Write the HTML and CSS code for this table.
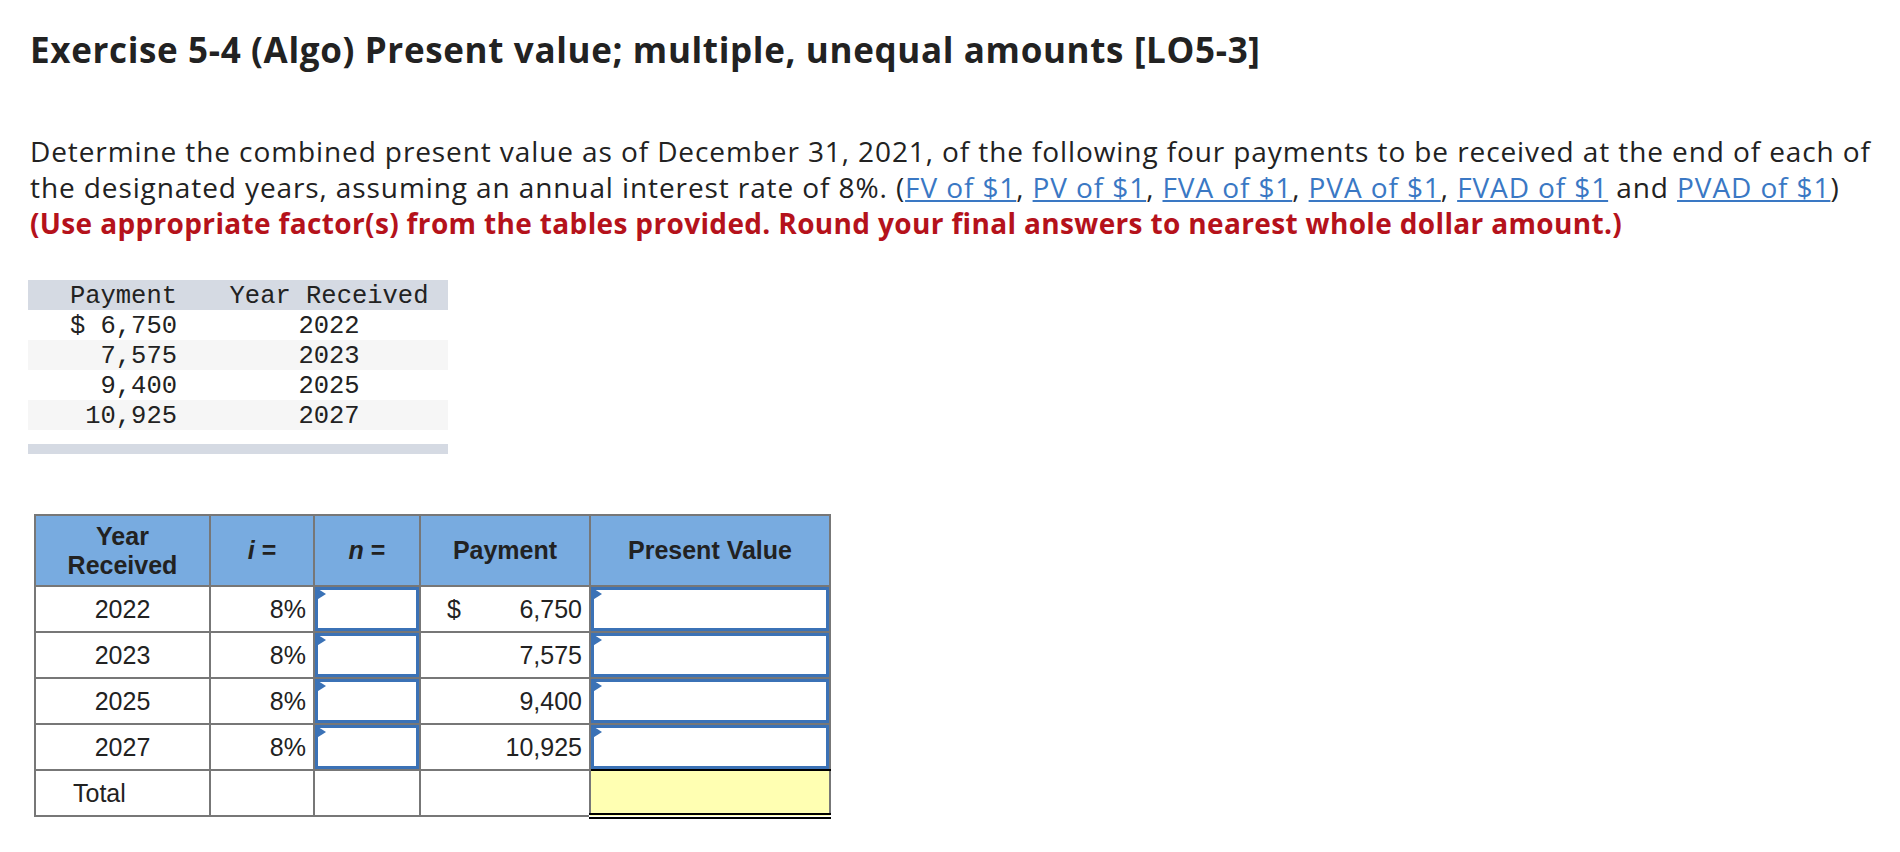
FILE: index.html
```html
<!DOCTYPE html>
<html lang="en">
<head>
<meta charset="utf-8">
<title>Exercise 5-4</title>
<link rel="stylesheet" href="styles.css">
</head>
<body>
<div class="page">
  <h1 class="title">Exercise 5-4 (Algo) Present value; multiple, unequal amounts [LO5-3]</h1>
  <p class="prompt"><span>Determine the combined present value as of December 31, 2021, of the following four payments to be received at the end of each of</span><br><span>the designated years, assuming an annual interest rate of 8%. (<a href="#">FV of $1</a>, <a href="#">PV of $1</a>, <a href="#">FVA of $1</a>, <a href="#">PVA of $1</a>, <a href="#">FVAD of $1</a> and <a href="#">PVAD of $1</a>)</span><br><strong class="note">(Use appropriate factor(s) from the tables provided. Round your final answers to nearest whole dollar amount.)</strong></p>

  <div class="given">
    <table class="given-table">
      <thead>
        <tr><th class="c-pay">Payment</th><th class="c-year">Year Received</th></tr>
      </thead>
      <tbody>
        <tr><td class="c-pay">$ 6,750</td><td class="c-year">2022</td></tr>
        <tr class="alt"><td class="c-pay">7,575</td><td class="c-year">2023</td></tr>
        <tr><td class="c-pay">9,400</td><td class="c-year">2025</td></tr>
        <tr class="alt"><td class="c-pay">10,925</td><td class="c-year">2027</td></tr>
      </tbody>
    </table>
    <div class="given-bar"></div>
  </div>

  <table class="work">
    <colgroup>
      <col class="w-year"><col class="w-i"><col class="w-n"><col class="w-pay"><col class="w-pv">
    </colgroup>
    <thead>
      <tr class="head-row">
        <th>Year<br>Received</th>
        <th><i>i</i> =</th>
        <th><i>n</i> =</th>
        <th>Payment</th>
        <th>Present Value</th>
      </tr>
    </thead>
    <tbody>
      <tr>
        <td class="year">2022</td><td class="rate">8%</td>
        <td class="inp"><div class="box"></div></td>
        <td class="amt"><span class="dollar">$</span><span>6,750</span></td>
        <td class="inp"><div class="box"></div></td>
      </tr>
      <tr>
        <td class="year">2023</td><td class="rate">8%</td>
        <td class="inp"><div class="box"></div></td>
        <td class="amt"><span>7,575</span></td>
        <td class="inp"><div class="box"></div></td>
      </tr>
      <tr>
        <td class="year">2025</td><td class="rate">8%</td>
        <td class="inp"><div class="box"></div></td>
        <td class="amt"><span>9,400</span></td>
        <td class="inp"><div class="box"></div></td>
      </tr>
      <tr>
        <td class="year">2027</td><td class="rate">8%</td>
        <td class="inp"><div class="box"></div></td>
        <td class="amt"><span>10,925</span></td>
        <td class="inp last-pv"><div class="box"></div></td>
      </tr>
      <tr>
        <td class="total-label">Total</td><td></td><td></td><td></td>
        <td class="total-pv"></td>
      </tr>
    </tbody>
  </table>
</div>
</body>
</html>
```

FILE: styles.css
```css
html, body {
  margin: 0;
  padding: 0;
  background: #ffffff;
}

body {
  font-family: "Open Sans", Lato, Arial, sans-serif;
  color: #222222;
}

.page {
  padding: 29px 0 0 30px;
}

.title {
  margin: 0;
  font-size: 35px;
  line-height: 42px;
  font-weight: 700;
  letter-spacing: 0.65px;
  color: #222222;
}

.prompt {
  margin: 62px 0 0 0;
  font-size: 28px;
  line-height: 36px;
  letter-spacing: 0.9px;
  white-space: nowrap;
  color: #222222;
}

.prompt a {
  color: #3a78c4;
  text-decoration: underline;
}

.note {
  color: #b5121b;
  font-weight: 700;
  letter-spacing: 0.35px;
}

/* given data table */
.given {
  margin-top: 39px;
  width: 420px;
  margin-left: -2px;
}

.given-table {
  border-collapse: collapse;
  width: 420px;
  font-family: "Liberation Mono", "Courier New", monospace;
  font-size: 25.5px;
  color: #222222;
}

.given-table tr {
  height: 30px;
}

.given-table th,
.given-table td {
  padding: 3px 0 0 0;
  line-height: 27px;
  font-weight: 400;
  vertical-align: top;
  white-space: nowrap;
}

.given-table thead tr {
  background: #d5dae3;
}

.given-table tr.alt {
  background: #f6f6f6;
}

.given-table .c-pay {
  width: 149px;
  text-align: right;
  padding-right: 13px;
}

.given-table .c-year {
  text-align: center;
  padding-left: 26px;
  padding-right: 6px;
}

.given-bar {
  margin-top: 14px;
  height: 10px;
  background: #d5dae3;
}

/* work table */
.work {
  margin-top: 60px;
  margin-left: 4px;
  border-collapse: collapse;
  table-layout: fixed;
  width: 797px;
  font-family: "Liberation Sans", Arial, sans-serif;
  font-size: 25px;
  color: #222222;
}

.w-year { width: 175px; }
.w-i { width: 104px; }
.w-n { width: 106px; }
.w-pay { width: 170px; }
.w-pv { width: 240px; }

.work th,
.work td {
  border: 2px solid #777777;
  padding: 0;
}

.work tbody tr {
  height: 46px;
}

.work thead tr {
  height: 71px;
}

.work th {
  background: #78abe0;
  font-weight: 700;
  line-height: 29px;
  text-align: center;
  vertical-align: middle;
}

.work td {
  vertical-align: middle;
  background: #ffffff;
}

.work td.year {
  text-align: center;
}

.work td.rate {
  text-align: right;
  padding-right: 7px;
}

.work td.amt {
  padding: 0 7px 0 26px;
  text-align: right;
}

.work td.amt .dollar {
  float: left;
}

.work td.total-label {
  padding-left: 37px;
}

.work td.inp {
  padding: 0;
  vertical-align: top;
}

.box {
  position: relative;
  box-sizing: border-box;
  height: 44px;
  border: 3px solid #3b72b6;
  background: #ffffff;
}

.box::before {
  content: "";
  position: absolute;
  left: -3px;
  top: -3px;
  width: 0;
  height: 0;
  border-top: 7px solid transparent;
  border-bottom: 7px solid transparent;
  border-left: 11px solid #3b72b6;
}

.work td.last-pv {
  border-bottom: 2px solid #000000;
}

.work td.total-pv {
  background: #ffffb2;
  border-top: 2px solid #000000;
  border-bottom: 6px double #000000;
}
```
